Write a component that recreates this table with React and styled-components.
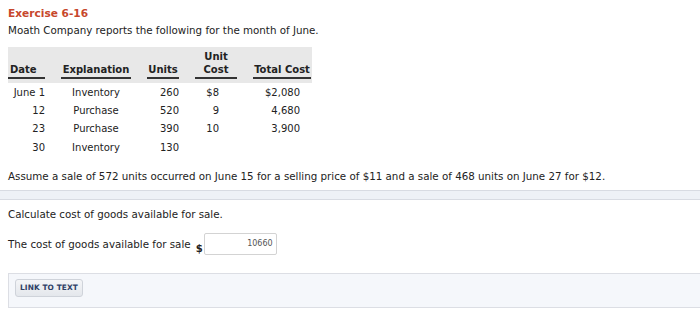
import styled, { createGlobalStyle } from "styled-components";

const Global = createGlobalStyle`
  body {
    margin: 0;
    background: #ffffff;
    font-family: "DejaVu Sans", Verdana, sans-serif;
    color: #222222;
  }
`;

const Page = styled.div`
  width: 700px;
  height: 317px;
  overflow: hidden;
  padding-top: 6px;
`;

const Section = styled.div`
  padding: 0 8px;
`;

const Title = styled.div`
  color: #c7472c;
  font-weight: bold;
  font-size: 10.6px;
  line-height: 14px;
`;

const Text = styled.p`
  margin: ${(p) => p.$margin || "0"};
  font-size: 10.3px;
  line-height: 14px;
  color: #222222;
  white-space: nowrap;
`;

const Table = styled.table`
  border-collapse: collapse;
  margin-top: 10px;
  font-size: 10px;
`;

const HeadRow = styled.tr`
  background: #e8e8e8;
`;

const Th = styled.th`
  padding: 3px 0 4px ${(p) => (p.$first ? "0" : "16px")};
  padding-right: ${(p) => (p.$last ? "1px" : "0")};
  vertical-align: bottom;
  font-weight: bold;
  text-align: ${(p) => p.$align || "center"};
`;

const HeadLabel = styled.div`
  width: ${(p) => p.$w}px;
  border-bottom: 2px solid #333333;
  line-height: 13px;
  padding-bottom: 1px;
  padding-left: ${(p) => p.$pl || 0}px;
  box-sizing: border-box;
`;

const Td = styled.td`
  padding: 0 ${(p) => p.$pr || 0}px 0 ${(p) => (p.$first ? "0" : "16px")};
  height: 18.4px;
  text-align: ${(p) => p.$align || "right"};
  color: #222222;
`;

const Band = styled.div`
  margin-top: 7px;
  height: 8px;
  background: #eef1f6;
  border-top: 1px solid #d8dbe2;
  border-bottom: 1px solid #d8dbe2;
`;

const AnswerRow = styled.div`
  display: flex;
  align-items: center;
  margin-top: 12px;
  font-size: 10.3px;
`;

const Dollar = styled.span`
  font-weight: bold;
  font-size: 10px;
  margin: 10px 1px 0 5px;
`;

const Input = styled.div`
  width: 68px;
  height: 20px;
  border: 1px solid #d3d3d3;
  border-radius: 2px;
  box-sizing: content-box;
  display: flex;
  align-items: center;
  justify-content: flex-end;
  padding-right: 3px;
  font-size: 8px;
  color: #555555;
`;

const LinkPanel = styled.div`
  margin: 18px 0 0 8px;
  background: #f5f7fb;
  border: 1px solid #dcdee4;
  border-right: none;
  display: flex;
  align-items: flex-start;
  padding: 5px 0 0 6px;
  box-sizing: border-box;
  height: 35px;
`;

const LinkButton = styled.button`
  height: 18px;
  padding: 0 4px;
  border: 1px solid #cfd3da;
  border-radius: 3px;
  background: linear-gradient(#f4f5f7, #e4e7ec);
  color: #2e3f66;
  font-family: "DejaVu Sans", Verdana, sans-serif;
  font-weight: bold;
  font-size: 7.4px;
  letter-spacing: 0.1px;
`;

const rows = [
  ["June 1", "Inventory", "260", "$8", "$2,080"],
  ["12", "Purchase", "520", "9", "4,680"],
  ["23", "Purchase", "390", "10", "3,900"],
  ["30", "Inventory", "130", "", ""],
];

export default function App() {
  return (
    <Page>
      <Global />
      <Section>
        <Title>Exercise 6-16</Title>
        <Text $margin="3px 0 0 0">Moath Company reports the following for the month of June.</Text>
        <Table>
          <thead>
            <HeadRow>
              <Th $first $align="left">
                <HeadLabel $w={37} $pl={2}>Date</HeadLabel>
              </Th>
              <Th>
                <HeadLabel $w={70}>Explanation</HeadLabel>
              </Th>
              <Th>
                <HeadLabel $w={32}>Units</HeadLabel>
              </Th>
              <Th>
                <HeadLabel $w={42}>
                  Unit
                  <br />
                  Cost
                </HeadLabel>
              </Th>
              <Th $last>
                <HeadLabel $w={58}>Total Cost</HeadLabel>
              </Th>
            </HeadRow>
          </thead>
          <tbody>
            {rows.map((r, i) => (
              <tr key={i}>
                <Td $first>{r[0]}</Td>
                <Td $align="center">{r[1]}</Td>
                <Td>{r[2]}</Td>
                <Td $pr={18}>{r[3]}</Td>
                <Td $pr={12}>{r[4]}</Td>
              </tr>
            ))}
          </tbody>
        </Table>
        <Text $margin="12px 0 0 0">
          Assume a sale of 572 units occurred on June 15 for a selling price of $11 and a sale of 468 units on June 27 for $12.
        </Text>
      </Section>
      <Band />
      <Section>
        <Text $margin="7px 0 0 0">Calculate cost of goods available for sale.</Text>
        <AnswerRow>
          <span>The cost of goods available for sale</span>
          <Dollar>$</Dollar>
          <Input>10660</Input>
        </AnswerRow>
      </Section>
      <LinkPanel>
        <LinkButton>LINK TO TEXT</LinkButton>
      </LinkPanel>
    </Page>
  );
}
